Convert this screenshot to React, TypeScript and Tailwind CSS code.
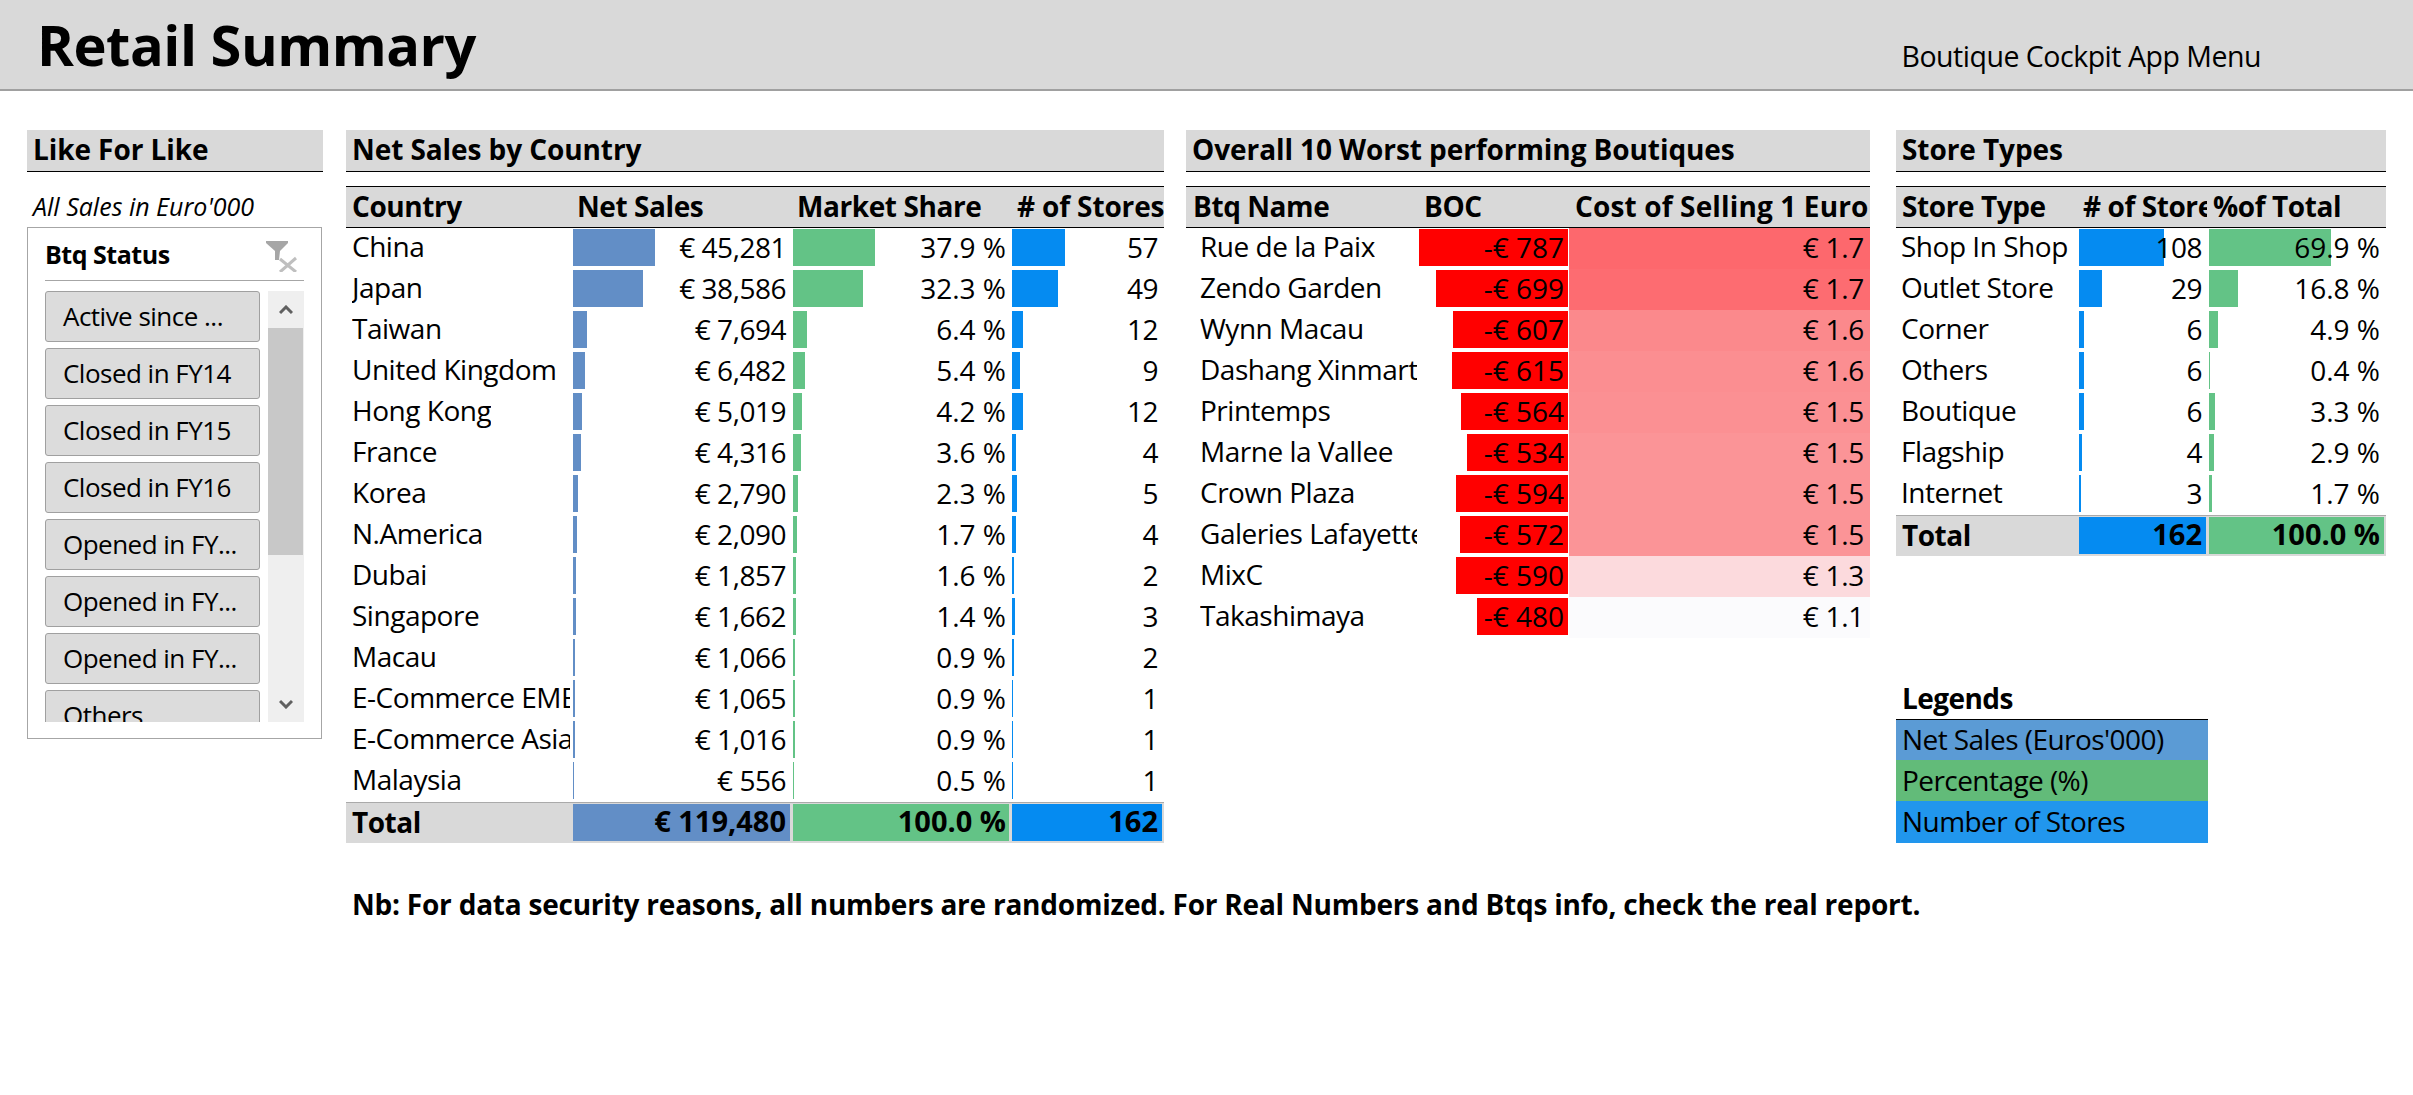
import React from 'react';

const countries = [
  { name: 'China', sales: 45281, share: 37.9, stores: 57 },
  { name: 'Japan', sales: 38586, share: 32.3, stores: 49 },
  { name: 'Taiwan', sales: 7694, share: 6.4, stores: 12 },
  { name: 'United Kingdom', sales: 6482, share: 5.4, stores: 9 },
  { name: 'Hong Kong', sales: 5019, share: 4.2, stores: 12 },
  { name: 'France', sales: 4316, share: 3.6, stores: 4 },
  { name: 'Korea', sales: 2790, share: 2.3, stores: 5 },
  { name: 'N.America', sales: 2090, share: 1.7, stores: 4 },
  { name: 'Dubai', sales: 1857, share: 1.6, stores: 2 },
  { name: 'Singapore', sales: 1662, share: 1.4, stores: 3 },
  { name: 'Macau', sales: 1066, share: 0.9, stores: 2 },
  { name: 'E-Commerce EMEA', sales: 1065, share: 0.9, stores: 1 },
  { name: 'E-Commerce Asia', sales: 1016, share: 0.9, stores: 1 },
  { name: 'Malaysia', sales: 556, share: 0.5, stores: 1 },
];

const boutiques = [
  { name: 'Rue de la Paix', boc: 787, cost: '1.7', color: '#fd686d' },
  { name: 'Zendo Garden', boc: 699, cost: '1.7', color: '#fd6c71' },
  { name: 'Wynn Macau', boc: 607, cost: '1.6', color: '#fb898c' },
  { name: 'Dashang Xinmart', boc: 615, cost: '1.6', color: '#fb8e91' },
  { name: 'Printemps', boc: 564, cost: '1.5', color: '#fb9093' },
  { name: 'Marne la Vallee', boc: 534, cost: '1.5', color: '#fb9497' },
  { name: 'Crown Plaza', boc: 594, cost: '1.5', color: '#fb9497' },
  { name: 'Galeries Lafayette', boc: 572, cost: '1.5', color: '#fb9497' },
  { name: 'MixC', boc: 590, cost: '1.3', color: '#fcdadd' },
  { name: 'Takashimaya', boc: 480, cost: '1.1', color: '#fbfbfd' },
];

const storeTypes = [
  { name: 'Shop In Shop', stores: 108, share: 69.9 },
  { name: 'Outlet Store', stores: 29, share: 16.8 },
  { name: 'Corner', stores: 6, share: 4.9 },
  { name: 'Others', stores: 6, share: 0.4 },
  { name: 'Boutique', stores: 6, share: 3.3 },
  { name: 'Flagship', stores: 4, share: 2.9 },
  { name: 'Internet', stores: 3, share: 1.7 },
];

const slicerItems = ['Active since ...', 'Closed in FY14', 'Closed in FY15', 'Closed in FY16', 'Opened in FY...', 'Opened in FY...', 'Opened in FY...', 'Others'];

const SectionTitle: React.FC<{ title: string }> = ({ title }) => (
  <div className="h-[42px] bg-[#d9d9d9] border-b border-black flex items-center pl-[6px] pb-[3px] text-[28px] font-bold tracking-[-0.003em] whitespace-nowrap">
    {title}
  </div>
);

const HeadCell: React.FC<{ label: string; className: string }> = ({ label, className }) => (
  <div className={`h-full flex items-center pb-[2px] overflow-hidden whitespace-nowrap ${className}`}>{label}</div>
);

const BarCell: React.FC<{ label: string; barWidth: number; barColor: string; className: string }> = ({ label, barWidth, barColor, className }) => (
  <div className={`relative h-full flex items-center justify-end pb-[4px] whitespace-nowrap ${className}`}>
    <div className="absolute left-0 top-[1px] h-[37px]" style={{ width: barWidth, backgroundColor: barColor }} />
    <span className="relative">{label}</span>
  </div>
);

const fmt = (n: number) => n.toLocaleString('en-US');

const BLUE = '#628ec6';
const GREEN = '#63c386';
const BRIGHT = '#058bf1';

function App() {
  return (
    <div className="min-h-screen bg-white text-black font-['Open_Sans','Noto_Sans',sans-serif] tracking-[-0.03em]">
      <header className="h-[91px] bg-[#d9d9d9] border-b-2 border-[#a0a0a0] flex pl-[37px]">
        <h1 className="text-[56px] leading-[88px] font-bold">Retail Summary</h1>
        <div className="ml-auto mr-[152px] pt-[36px] text-[28.5px] leading-[40px]">Boutique Cockpit App Menu</div>
      </header>

      <div className="flex pl-[27px] pt-[39px]">
        {/* slicer column */}
        <div className="w-[296px]">
          <SectionTitle title="Like For Like" />
          <div className="h-[55px] flex items-end pl-[6px] pb-[2px] text-[25px] italic tracking-normal">All Sales in Euro'000</div>
          <div className="w-[295px] h-[512px] border border-[#a6a6a6] pl-[17px]">
            <div className="w-[259px] h-[53px] border-b border-[#a6a6a6] flex items-center justify-between">
              <span className="text-[25px] font-bold pt-[2px]">Btq Status</span>
              <svg width="31" height="31" viewBox="0 0 31 31" className="mr-[7px] mt-[5px]">
                <polygon points="0,0 22,0 22,2 14,10 13,19 9,19 9,10 0,2" fill="#a6a6a6" />
                <path d="M14 18 L30 31 M30 17 L14 31" stroke="#bfbfbf" strokeWidth="3" fill="none" />
              </svg>
            </div>
            <div className="mt-[10px] h-[431px] flex overflow-hidden">
              <div className="w-[215px] flex flex-col gap-[6px]">
                {slicerItems.map((item, i) => (
                  <div key={i} className="h-[51px] shrink-0 bg-[#dcdcdc] border border-[#a0a0a0] rounded-[3px] pl-[17px] flex items-center text-[26px] tracking-[-0.02em]">
                    {item}
                  </div>
                ))}
              </div>
              <div className="ml-[8px] w-[36px] bg-[#efefef] relative">
                <div className="h-[37px] flex items-center justify-center">
                  <svg width="14" height="10" viewBox="0 0 14 10"><path d="M1 8 L7 2 L13 8" stroke="#606060" strokeWidth="3" fill="none" /></svg>
                </div>
                <div className="h-[227px] w-[35px] bg-[#c8c8c8]" />
                <div className="absolute bottom-[13px] left-0 w-full flex justify-center">
                  <svg width="14" height="10" viewBox="0 0 14 10"><path d="M1 2 L7 8 L13 2" stroke="#606060" strokeWidth="3" fill="none" /></svg>
                </div>
              </div>
            </div>
          </div>
        </div>

        {/* net sales */}
        <div className="w-[818px] ml-[23px]">
          <SectionTitle title="Net Sales by Country" />
          <div className="mt-[14px] h-[42px] bg-[#d9d9d9] border-y border-black flex text-[28px] font-bold tracking-[-0.015em]">
            <HeadCell label="Country" className="w-[227px] pl-[6px]" />
            <HeadCell label="Net Sales" className="w-[224px] pl-[4px]" />
            <HeadCell label="Market Share" className="w-[215px] pl-[0px]" />
            <HeadCell label="# of Stores" className="w-[152px] pl-[5px] tracking-[-0.005em]" />
          </div>
          {countries.map((c) => (
            <div key={c.name} className="h-[41px] flex text-[28px]">
              <div className="w-[227px] pl-[6px] pr-[3px] pb-[5px] h-full flex items-center">
                <span className="overflow-hidden whitespace-nowrap">{c.name}</span>
              </div>
              <BarCell label={`€ ${fmt(c.sales)}`} barWidth={(c.sales / 45281) * 82} barColor={BLUE} className="w-[220px] pr-[7px]" />
              <BarCell label={`${c.share.toFixed(1)} %`} barWidth={(c.share / 37.9) * 82} barColor={GREEN} className="w-[219px] pr-[6px] tracking-normal" />
              <BarCell label={`${c.stores}`} barWidth={(c.stores / 57) * 53} barColor={BRIGHT} className="w-[152px] pr-[6px]" />
            </div>
          ))}
          <div className="h-[41px] bg-[#d9d9d9] border-t border-[#aaaaaa] flex text-[28px] font-bold">
            <div className="w-[227px] pl-[6px] pb-[3px] flex items-center">Total</div>
            <BarCell label="€ 119,480" barWidth={217} barColor={BLUE} className="w-[220px] pr-[7px] text-[29px] tracking-normal" />
            <BarCell label="100.0 %" barWidth={216} barColor={GREEN} className="w-[219px] pr-[6px] text-[29px] tracking-normal" />
            <BarCell label="162" barWidth={150} barColor={BRIGHT} className="w-[152px] pr-[6px] text-[29px] tracking-normal" />
          </div>
        </div>

        {/* worst boutiques */}
        <div className="w-[684px] ml-[22px]">
          <SectionTitle title="Overall 10 Worst performing Boutiques" />
          <div className="mt-[14px] h-[42px] bg-[#d9d9d9] border-y border-black flex text-[28px] font-bold tracking-[-0.015em]">
            <HeadCell label="Btq Name" className="w-[231px] pl-[7px]" />
            <HeadCell label="BOC" className="w-[152px] pl-[7px]" />
            <HeadCell label="Cost of Selling 1 Euro" className="w-[301px] pl-[6px] tracking-[0.005em]" />
          </div>
          {boutiques.map((b) => (
            <div key={b.name} className="h-[41px] flex text-[28px]">
              <div className="w-[231px] pl-[14px] pb-[5px] h-full flex items-center">
                <span className="overflow-hidden whitespace-nowrap">{b.name}</span>
              </div>
              <div className="relative w-[152px] h-full flex items-center justify-end pr-[5px] pb-[4px] tracking-normal">
                <div className="absolute right-[1px] top-[1px] h-[37px] bg-[#ff0000]" style={{ width: (b.boc / 787) * 149 }} />
                <span className="relative">-€ {b.boc}</span>
              </div>
              <div className="w-[301px] h-full flex items-center justify-end pr-[6px] pb-[4px] tracking-[-0.01em]" style={{ backgroundColor: b.color }}>
                € {b.cost}
              </div>
            </div>
          ))}
        </div>

        {/* store types */}
        <div className="w-[490px] ml-[26px]">
          <SectionTitle title="Store Types" />
          <div className="mt-[14px] h-[42px] bg-[#d9d9d9] border-y border-black flex text-[28px] font-bold tracking-[-0.015em]">
            <HeadCell label="Store Type" className="w-[183px] pl-[6px]" />
            <HeadCell label="# of Stores" className="w-[128px] pl-[4px]" />
            <HeadCell label="%of Total" className="w-[179px] pl-[6px]" />
          </div>
          {storeTypes.map((s) => (
            <div key={s.name} className="h-[41px] flex text-[28px]">
              <div className="w-[183px] pl-[5px] pb-[5px] h-full flex items-center whitespace-nowrap">{s.name}</div>
              <BarCell label={`${s.stores}`} barWidth={(s.stores / 108) * 85} barColor={BRIGHT} className="w-[130px] pr-[7px]" />
              <BarCell label={`${s.share.toFixed(1)} %`} barWidth={(s.share / 69.9) * 122} barColor={GREEN} className="w-[177px] pr-[6px] tracking-normal" />
            </div>
          ))}
          <div className="h-[41px] bg-[#d9d9d9] border-t border-[#aaaaaa] flex text-[28px] font-bold">
            <div className="w-[183px] pl-[6px] pb-[3px] flex items-center">Total</div>
            <BarCell label="162" barWidth={127} barColor={BRIGHT} className="w-[130px] pr-[7px] text-[29px] tracking-normal" />
            <BarCell label="100.0 %" barWidth={175} barColor={GREEN} className="w-[177px] pr-[6px] text-[29px] tracking-normal" />
          </div>

          <div className="mt-[120px] w-[312px]">
            <div className="h-[44px] border-b border-black pl-[6px] flex items-center text-[28px] font-bold tracking-[-0.02em]">Legends</div>
            <div className="h-[40px] bg-[#5b9bd5] pl-[6px] flex items-center pb-[2px] text-[28px] tracking-[-0.02em]">Net Sales (Euros'000)</div>
            <div className="h-[41px] bg-[#62bb79] pl-[6px] flex items-center pb-[2px] text-[28px] tracking-[-0.02em]">Percentage (%)</div>
            <div className="h-[42px] bg-[#2196ed] pl-[6px] flex items-center pb-[2px] text-[28px] tracking-[-0.02em]">Number of Stores</div>
          </div>
        </div>
      </div>

      <div className="mt-[42px] pl-[352px] h-[40px] flex items-center pb-[3px] text-[28px] font-bold tracking-[-0.008em] whitespace-nowrap">
        Nb: For data security reasons, all numbers are randomized. For Real Numbers and Btqs info, check the real report.
      </div>
    </div>
  );
}

export default App;
